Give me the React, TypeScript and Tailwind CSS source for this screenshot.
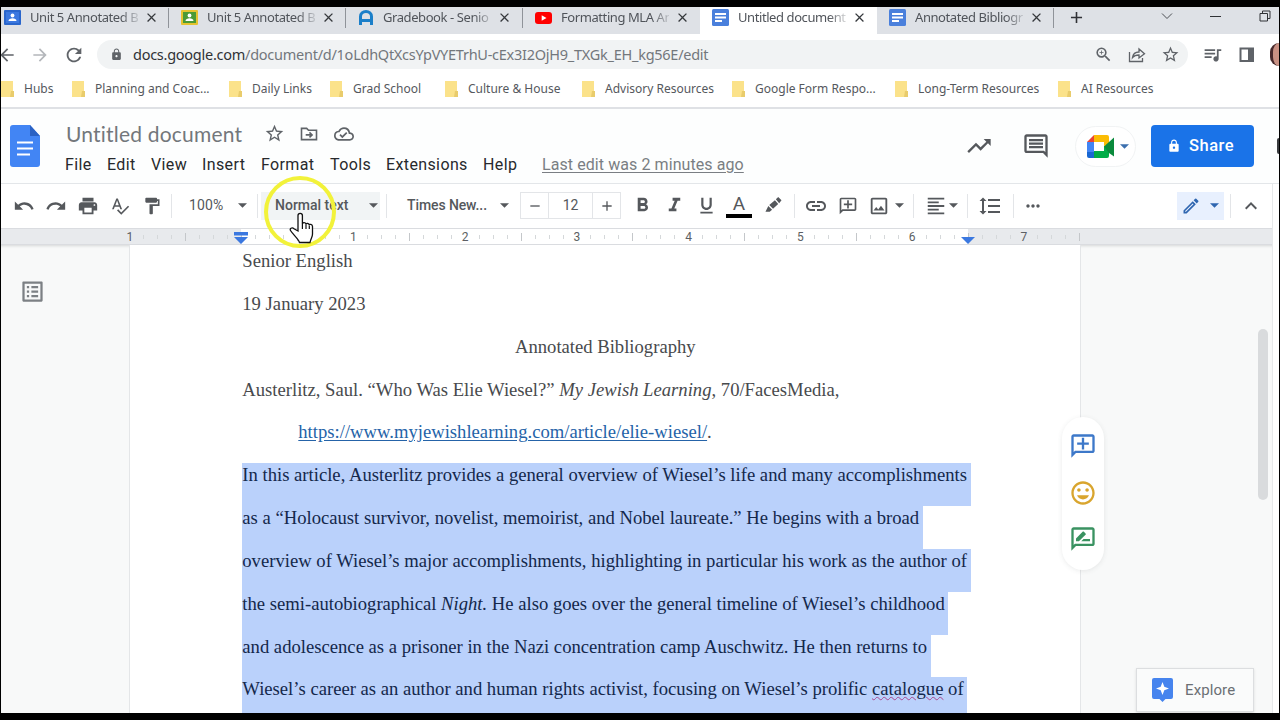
import type { ReactNode } from "react"
import {
  MdAdd,
  MdArrowBack,
  MdArrowForward,
  MdClose,
  MdFormatAlignLeft,
  MdFormatBold,
  MdFormatItalic,
  MdFormatLineSpacing,
  MdFormatPaint,
  MdFormatUnderlined,
  MdKeyboardArrowUp,
  MdLink,
  MdLock,
  MdMoreHoriz,
  MdOutlineAddComment,
  MdOutlineCloudDone,
  MdOutlineImage,
  MdOutlineInsertComment,
  MdOutlineInsertEmoticon,
  MdOutlineListAlt,
  MdOutlineModeEdit,
  MdOutlineRateReview,
  MdPrint,
  MdQueueMusic,
  MdRedo,
  MdRefresh,
  MdRemove,
  MdSpellcheck,
  MdStarBorder,
  MdTrendingUp,
  MdUndo,
  MdZoomIn,
} from "react-icons/md"

const uiFont = "font-['Noto_Sans',sans-serif]"

function DocsFavicon() {
  return (
    <svg viewBox="0 0 17 17" className="size-[17px] shrink-0">
      <rect width="17" height="17" rx="1.5" fill="#4a80dc" />
      <path d="M3 4h11v2H3zM3 7.5h11v2H3zM3 11h7v2H3z" fill="#fff" />
    </svg>
  )
}

function ClassroomFavicon({ green }: { green?: boolean }) {
  return (
    <svg viewBox="0 0 17 15" className="h-[15px] w-[17px] shrink-0">
      <rect width="17" height="15" rx="1" fill={green ? "#e5c32f" : "#2a66cc"} />
      <rect x="2" y="2" width="13" height="11" fill={green ? "#4b9a35" : "#3b78e0"} />
      <circle cx="8.5" cy="5.5" r="1.9" fill="#fff" />
      <path d="M4.5 11c0-2 2-2.800 4-2.800s4 .8 4 2.800z" fill="#fff" />
    </svg>
  )
}

function GradebookFavicon() {
  return (
    <svg viewBox="0 0 16 16" className="size-4 shrink-0">
      <path
        d="M2.500 15V6.500a5.500 5 0 0 1 11 0V15M2.500 10.500h11"
        fill="none"
        stroke="#1b7fc9"
        strokeWidth="3"
      />
    </svg>
  )
}

function YoutubeFavicon() {
  return (
    <svg viewBox="0 0 17 12" className="h-3 w-[17px] shrink-0">
      <rect width="17" height="12" rx="3" fill="#f00" />
      <path d="M6.700 3.300 11.500 6l-4.800 2.700z" fill="#fff" />
    </svg>
  )
}

interface TabProps {
  icon: ReactNode
  title: string
  first?: boolean
  active?: boolean
  divider?: boolean
}

function Tab({ icon, title, first, active, divider }: TabProps) {
  return (
    <div
      className={`flex h-full shrink-0 items-center pb-[6px] ${first ? "w-[168px] pl-[3px]" : "w-[177px] pl-3"} ${
        active ? "bg-white" : ""
      }`}
    >
      {icon}
      <span className="ml-[9px] w-[108px] text-[13px] tracking-[-0.42px] whitespace-nowrap text-[#50545a] [mask-image:linear-gradient(to_right,black_84%,transparent_104%)]">
        {title}
      </span>
      <MdClose className="ml-[6px] size-[15px] shrink-0 text-[#35383c]" />
      <span className={`ml-auto h-5 w-px ${divider ? "bg-[#8f9399]" : ""}`} />
    </div>
  )
}

const bookmarks = [
  { label: "Hubs", width: "w-[71px]" },
  { label: "Planning and Coac...", width: "w-[157px]" },
  { label: "Daily Links", width: "w-[101px]" },
  { label: "Grad School", width: "w-[115px]" },
  { label: "Culture & House", width: "w-[137px]" },
  { label: "Advisory Resources", width: "w-[150px]" },
  { label: "Google Form Respo...", width: "w-[163px]" },
  { label: "Long-Term Resources", width: "w-[163px]" },
  { label: "AI Resources", width: "w-[120px]" },
]

function Folder() {
  return (
    <svg viewBox="0 0 13 16" className="h-4 w-[13px] shrink-0">
      <path d="M0 0h12v16H0z" fill="#fbe28a" />
      <path d="M10 10h3v6h-4z" fill="#e9cc6c" />
    </svg>
  )
}

function Browser() {
  return (
    <div className={`${uiFont} shrink-0`}>
      <div className="flex h-[27px] items-center bg-[#dee1e6]">
        <Tab first divider icon={<ClassroomFavicon />} title="Unit 5 Annotated B" />
        <Tab divider icon={<ClassroomFavicon green />} title="Unit 5 Annotated B" />
        <Tab divider icon={<GradebookFavicon />} title="Gradebook - Senio" />
        <Tab icon={<YoutubeFavicon />} title="Formatting MLA An" />
        <Tab active icon={<DocsFavicon />} title="Untitled document" />
        <Tab divider icon={<DocsFavicon />} title="Annotated Bibliogr" />
        <MdAdd className="mb-[6px] ml-[13px] size-[19px] text-[#303236]" />
        <div className="mb-[9px] ml-auto flex items-center text-[#4c4f54]">
          <svg viewBox="0 0 12 8" className="h-2 w-3 fill-none stroke-current">
            <path d="M1 1.500 6 6.500l5-5" />
          </svg>
          <span className="ml-[37px] h-px w-[11px] bg-[#303236]" />
          <svg viewBox="0 0 12 12" className="mr-2 ml-[38px] size-3 fill-none stroke-[#303236]">
            <path d="M1 3.500h7.500V11H1zM3.500 3V1H11v7.500H9" />
          </svg>
        </div>
      </div>

      <div className="flex h-[41px] items-center bg-white text-[#5f6368]">
        <MdArrowBack className="-ml-1 size-5" />
        <MdArrowForward className="ml-[13px] size-5 text-[#b4b7bb]" />
        <MdRefresh className="ml-[13px] size-[22px]" />
        <div className="ml-3 flex h-[29px] w-[1091px] items-center rounded-full bg-[#f1f3f4]">
          <MdLock className="ml-[13px] size-[13px]" />
          <span className="ml-[10px] text-[14.500px] tracking-[-0.26px] text-[#73777c]">
            <span className="text-[#303236]">docs.google.com</span>
            /document/d/1oLdhQtXcsYpVYETrhU-cEx3I2OjH9_TXGk_EH_kg56E/edit
          </span>
          <div className="mr-[8px] ml-auto flex items-center gap-[15px]">
            <MdZoomIn className="size-[19px]" />
            <svg viewBox="0 0 18 18" className="size-[18px] fill-none stroke-current stroke-[1.3]">
              <path d="M1.500 6v9.500h13V12M4.500 11.500C5 8 7.500 6 11 6V3l5.500 4.700L11 12V9C8 9 6 9.700 4.500 11.500z" />
            </svg>
            <MdStarBorder className="size-[19px]" />
          </div>
        </div>
        <MdQueueMusic className="ml-[14px] size-[21px]" />
        <svg viewBox="0 0 16 16" className="ml-4 size-4">
          <path d="M1.500 1.500h12.500v12.500H1.500z" className="fill-none stroke-current stroke-2" />
          <path d="M9 1h6v14H9z" className="fill-current" />
        </svg>
        <div className="ml-auto h-[23px] w-[9px] rounded-l-full border-l-[3px] border-[#47292c] bg-[#c99184]" />
      </div>

      <div className="flex h-[34px] items-center overflow-hidden border-b-2 border-[#dfe1e5] bg-white pb-[5px] text-[12px] whitespace-nowrap text-[#55585d]">
        {bookmarks.map((item) => (
          <div key={item.label} className={`flex shrink-0 items-center ${item.width}`}>
            <Folder />
            <span className="ml-[10px]">{item.label}</span>
          </div>
        ))}
      </div>
    </div>
  )
}

function Caret({ className = "" }: { className?: string }) {
  return (
    <svg viewBox="0 0 10 5" className={`h-[5px] w-[9px] shrink-0 fill-current ${className}`}>
      <path d="M0 0h10L5 5z" />
    </svg>
  )
}

const menus = [
  { label: "File", width: "w-[42px]" },
  { label: "Edit", width: "w-[44px]" },
  { label: "View", width: "w-[51px]" },
  { label: "Insert", width: "w-[59px]" },
  { label: "Format", width: "w-[69px]" },
  { label: "Tools", width: "w-[56px]" },
  { label: "Extensions", width: "w-[97px]" },
  { label: "Help", width: "w-[59px]" },
]

function DocsHeader() {
  return (
    <header className="flex h-[75px] shrink-0 border-b border-[#e3e6e9] bg-[#fdfefe] font-[Roboto,sans-serif]">
      <svg viewBox="0 0 30 42" className="mt-4 ml-[9px] h-[42px] w-[30px]">
        <path d="M3 0h17l10 11v28a3 3 0 0 1-3 3H3a3 3 0 0 1-3-3V3a3 3 0 0 1 3-3z" fill="#4285f4" />
        <path d="M20 0l10 11H20z" fill="#2a62c4" />
        <path d="M7 16.500h16v2H7zM7 22.500h16v2H7zM7 28.500h13v2H7z" fill="#fff" />
      </svg>

      <div className="ml-[26px] flex flex-col">
        <div className="mt-[11px] flex h-[27px] items-center text-[#5f6368]">
          <span className="w-[198px] font-[Lato,sans-serif] text-[21px] tracking-[0.2px] text-[#73777b]">
            Untitled document
          </span>
          <MdStarBorder className="size-[21px]" />
          <svg viewBox="0 0 18 16" className="ml-[15px] h-[15px] w-[18px] fill-none stroke-current stroke-[1.7]">
            <path d="M1 2.500h5.500l2 2H17v10H1zM5.500 9.500h6M9.500 6.800l2.800 2.700-2.800 2.700" />
          </svg>
          <MdOutlineCloudDone className="ml-[16px] size-5" />
        </div>
        <nav className="mt-[6px] -ml-px flex h-6 items-center text-[16px] tracking-[0.38px] text-[#27292c]">
          {menus.map((menu) => (
            <span key={menu.label} className={menu.width}>
              {menu.label}
            </span>
          ))}
          <span className="tracking-[0.08px] text-[#7a7e83] underline underline-offset-2">Last edit was 2 minutes ago</span>
        </nav>
      </div>

      <div className="mt-4 mr-[25px] ml-auto flex h-[42px] items-center text-[#55585c]">
        <MdTrendingUp className="size-[28px]" />
        <MdOutlineInsertComment className="ml-[29px] size-[28px]" />
        <div className="ml-[25px] flex h-[41px] w-[61px] items-center rounded-full border border-[#f1f3f4] bg-white pl-[11px]">
          <svg viewBox="0 0 28 23" className="h-[23px] w-[28px]">
            <path d="M0 7 7 0v7z" fill="#ea4335" />
            <path d="M7 0h13a2 2 0 0 1 2 2v8l-5 1V7H7z" fill="#fbbc04" />
            <path d="M0 7h7v10H0z" fill="#4285f4" />
            <path d="M0 17h7v6H2a2 2 0 0 1-2-2z" fill="#1967d2" />
            <path d="M7 16h10v-5l5 1v9a2 2 0 0 1-2 2H7z" fill="#00ac47" />
            <path d="M17 11.500 27 2.500v19l-5-3.500z" fill="#0a8a3c" />
          </svg>
          <Caret className="ml-[5px] text-[#3c6fae]" />
        </div>
        <button className="ml-[15px] flex h-[42px] w-[103px] items-center rounded bg-[#1a73e8] pl-[16px] text-white">
          <MdLock className="size-[14px]" />
          <span className="ml-[8px] text-[16.500px] font-medium tracking-[0.5px]">Share</span>
        </button>
      </div>
    </header>
  )
}

function ToolButton({ children, className = "w-8" }: { children: ReactNode; className?: string }) {
  return <span className={`flex h-full shrink-0 items-center justify-center ${className}`}>{children}</span>
}

function Separator({ className = "" }: { className?: string }) {
  return <span className={`h-6 w-px shrink-0 bg-[#e3e5e8] ${className}`} />
}

function Toolbar() {
  return (
    <div className="flex h-[44px] shrink-0 items-center bg-white pb-px pl-[7px] font-[Roboto,sans-serif] text-[14px] font-medium text-[#55585c]">
      <ToolButton><MdUndo className="size-[22px]" /></ToolButton>
      <ToolButton><MdRedo className="size-[22px]" /></ToolButton>
      <ToolButton><MdPrint className="size-[22px]" /></ToolButton>
      <ToolButton><MdSpellcheck className="size-5" /></ToolButton>
      <ToolButton><MdFormatPaint className="size-5" /></ToolButton>
      <Separator className="ml-[3px]" />
      <span className="flex w-[85px] items-center pl-[17px] font-normal">
        <span className="w-[49px] tracking-[0.1px]">100%</span>
        <Caret />
      </span>
      <Separator />
      <span className="ml-[3px] flex h-[28px] w-[119px] items-center bg-[#f1f4f5] pl-[14px]">
        <span className="w-[94px]">Normal text</span>
        <Caret />
      </span>
      <Separator className="ml-1.5" />
      <span className="flex w-[133px] items-center pl-[20px]">
        <span className="w-[93px] tracking-[-0.1px]">Times New...</span>
        <Caret />
      </span>
      <span className="flex h-[27px] w-[101px] items-stretch border border-[#e3e5e8]">
        <ToolButton className="w-[27px]"><MdRemove className="size-4 stroke-current" /></ToolButton>
        <span className="flex flex-1 items-center justify-center border-x border-[#e3e5e8] font-normal">12</span>
        <ToolButton className="w-[27px]"><MdAdd className="size-4 stroke-current" /></ToolButton>
      </span>
      <ToolButton className="ml-[5px] w-8"><MdFormatBold className="size-[23px]" /></ToolButton>
      <ToolButton><MdFormatItalic className="size-[23px]" /></ToolButton>
      <ToolButton><MdFormatUnderlined className="size-[21px]" /></ToolButton>
      <ToolButton className="w-[34px] flex-col">
        <span className="text-[19px] leading-[21px] font-normal">A</span>
        <span className="h-1 w-[26px] bg-black" />
      </ToolButton>
      <ToolButton className="w-[35px]">
        <svg viewBox="0 0 18 18" className="size-[17px] fill-current">
          <path d="M11.500 2.500 14 0l3.500 3.500L15 6.500zM10.500 3.500 14 7.500l-5.500 5-4-4zM3.500 9.500l4 4L5 15.500H.5z" />
        </svg>
      </ToolButton>
      <Separator className="ml-[3px]" />
      <ToolButton className="ml-[5px] w-8"><MdLink className="size-6" /></ToolButton>
      <ToolButton><MdOutlineAddComment className="size-5 -scale-x-100" /></ToolButton>
      <ToolButton className="w-[29px]"><MdOutlineImage className="size-[22px]" /></ToolButton>
      <ToolButton className="w-3"><Caret /></ToolButton>
      <Separator className="ml-2" />
      <ToolButton className="ml-[9px] w-[25px]"><MdFormatAlignLeft className="size-[22px]" /></ToolButton>
      <ToolButton className="w-2.5"><Caret /></ToolButton>
      <Separator className="ml-[9px]" />
      <ToolButton className="ml-[6px] w-8"><MdFormatLineSpacing className="size-6" /></ToolButton>
      <Separator className="ml-[7px]" />
      <ToolButton className="ml-[3px] w-8"><MdMoreHoriz className="size-5" /></ToolButton>
      <span className="ml-[128px] flex h-[28px] w-[47px] items-center bg-[#e8f0fe] pl-1 text-[#2f66b0]">
        <MdOutlineModeEdit className="size-[20px]" />
        <Caret className="ml-[9px]" />
      </span>
      <Separator className="ml-[6px]" />
      <ToolButton className="ml-1 w-8"><MdKeyboardArrowUp className="size-6" /></ToolButton>
    </div>
  )
}

const ticks = Array.from({ length: 69 }, (_, i) => i)

function Ruler() {
  return (
    <div className="relative flex h-[17px] shrink-0 overflow-hidden border-y border-[#dadce0] bg-[linear-gradient(to_right,#e8eaed_240px,#fff_240px,#fff_967px,#e8eaed_967px)] pl-[122px] font-[Roboto,sans-serif] text-[12px] text-[#5c5f63]">
      {ticks.map((i) => (
        <span key={i} className="flex w-[13.98px] shrink-0 items-center justify-center">
          {i % 8 === 0 && i !== 8 ? (
            <span>{i === 0 ? 1 : i / 8 - 1}</span>
          ) : (
            <span className={i % 4 === 0 ? "h-2 w-px bg-[#c4c7ca]" : "h-1 w-px bg-[#d5d8da]"} />
          )}
        </span>
      ))}
      <svg viewBox="0 0 14 12" className="absolute top-[3px] left-[233px] h-3 w-3.5 fill-[#3b78e0]">
        <path d="M0 0h14v3.500H0zM0 5h14l-7 7z" />
      </svg>
      <svg viewBox="0 0 14 7" className="absolute top-[8px] left-[960px] h-[7px] w-3.5 fill-[#3b78e0]">
        <path d="M0 0h14L7 7z" />
      </svg>
    </div>
  )
}

interface LineProps {
  children: ReactNode
  className?: string
}

function Line({ children, className = "" }: LineProps) {
  return <div className={`h-[42.85px] leading-[23px] whitespace-nowrap ${className}`}>{children}</div>
}

function Selected({ children, className = "" }: LineProps) {
  return (
    <Line className={`bg-[#bad1fb] text-[#14284b] ${className}`}>
      {children}
    </Line>
  )
}

function Page() {
  return (
    <article className="w-[952px] shrink-0 overflow-hidden border-x border-[#e4e6e8] bg-white pt-[4px] pl-[112.300px] font-['Liberation_Serif',serif] text-[18.650px] text-[#484a4d]">
      <Line>Senior English</Line>
      <Line>19 January 2023</Line>
      <Line className="w-[726px] text-center">Annotated Bibliography</Line>
      <Line>
        Austerlitz, Saul. “Who Was Elie Wiesel?” <i>My Jewish Learning</i>, 70/FacesMedia,
      </Line>
      <Line className="pl-14">
        <a className="text-[#2563a8] underline underline-offset-2">
          https://www.myjewishlearning.com/article/elie-wiesel/
        </a>
        .
      </Line>
      <Selected className="w-[729px]">
        In this article, Austerlitz provides a general overview of Wiesel’s life and many accomplishments
      </Selected>
      <Selected className="w-[681px]">
        as a “Holocaust survivor, novelist, memoirist, and Nobel laureate.” He begins with a broad
      </Selected>
      <Selected className="w-[729px]">
        overview of Wiesel’s major accomplishments, highlighting in particular his work as the author of
      </Selected>
      <Selected className="w-[706px]">
        the semi-autobiographical <i>Night.</i> He also goes over the general timeline of Wiesel’s childhood
      </Selected>
      <Selected className="w-[689px]">
        and adolescence as a prisoner in the Nazi concentration camp Auschwitz. He then returns to
      </Selected>
      <Selected className="w-[725px]">
        Wiesel’s career as an author and human rights activist, focusing on Wiesel’s prolific{" "}
        <span className="underline decoration-[#a8478f] decoration-wavy decoration-1 underline-offset-1">catalogue</span> of
      </Selected>
    </article>
  )
}

function Pointer() {
  return (
    <div className="absolute top-[176px] left-[264px] size-[72px] rounded-full border-[4px] border-[#f2f23a]">
      <svg viewBox="0 0 25 32" className="absolute top-[32px] left-[21px] h-8 w-[25px]">
        <path
          d="M9 19V3.500a2.200 2.200 0 0 1 4.400 0V12c0-2 3.600-2 3.600.5 0-1.600 3.300-1.500 3.300.8 0-1.500 3.200-1.200 3.200 1.200V22c0 3-1.500 4-2.500 8.500H10.500C9.500 27 4 22.500 1.500 18.500c-1.200-2 1.500-3.500 3.500-1.800z"
          fill="#fff"
          stroke="#111"
          strokeWidth="1.300"
        />
        <path d="M13.400 12v5M17 12.500V17M20.300 13.500V17" stroke="#111" strokeWidth="1.200" />
      </svg>
    </div>
  )
}

export default function App() {
  return (
    <div className="relative h-[720px] w-[1280px] overflow-hidden bg-black pt-[7px] pr-[1px] pb-[7px] pl-[1px]">
      <div className="flex h-full flex-col overflow-hidden bg-white">
        <Browser />
        <DocsHeader />
        <div className="flex min-h-0 flex-1">
          <div className="flex w-[1272px] flex-col border-r border-[#e6e8ea]">
            <Toolbar />
            <Ruler />
            <main className="flex min-h-0 flex-1 bg-[#f8f9f9] shadow-[inset_0_3px_3px_-2px_rgba(60,64,67,0.18)]">
              <aside className="w-[128px] shrink-0 pt-[33px] pl-[18px]">
                <MdOutlineListAlt className="size-[27px] text-[#7c8084]" />
              </aside>
              <Page />
              <div className="flex flex-1 justify-end pt-[84px]">
                <div className="mr-[4px] h-[171px] w-[10px] rounded-full bg-[#d9dbdd]" />
              </div>
            </main>
          </div>
        </div>
      </div>

      <div className="absolute top-[417px] left-[1062px] flex h-[153px] w-[42px] flex-col items-center rounded-full bg-white pt-[15px] shadow-[0_1px_5px_rgba(60,64,67,0.1)]">
        <MdOutlineAddComment className="size-[28px] -scale-x-100 text-[#3d78c9]" />
        <MdOutlineInsertEmoticon className="mt-[19px] size-[28px] text-[#d9a52e]" />
        <MdOutlineRateReview className="mt-[18px] size-[28px] text-[#3a9261]" />
      </div>

      <button className="absolute top-[668px] left-[1136px] flex h-[44px] w-[118px] items-center border border-[#dcdee0] bg-[#fafbfb] pl-[15px] font-[Roboto,sans-serif] text-[15px] tracking-[0.1px] text-[#6b6f74] shadow-sm">
        <svg viewBox="0 0 21 24" className="h-6 w-[21px]">
          <path d="M2 0h17a2 2 0 0 1 2 2v17a2 2 0 0 1-2 2h-5.500L10.500 24l-3-3H2a2 2 0 0 1-2-2V2a2 2 0 0 1 2-2z" fill="#4684ee" />
          <path d="M10.500 4l1.800 4.700L17 10.500l-4.700 1.800-1.800 4.700-1.800-4.700L4 10.500l4.700-1.800z" fill="#fff" />
        </svg>
        <span className="ml-[12px]">Explore</span>
      </button>

      <div className="absolute top-[138px] left-[1277px] h-4 w-[2px] rounded-l-full bg-[#3a3c3f]" />

      <Pointer />
    </div>
  )
}
